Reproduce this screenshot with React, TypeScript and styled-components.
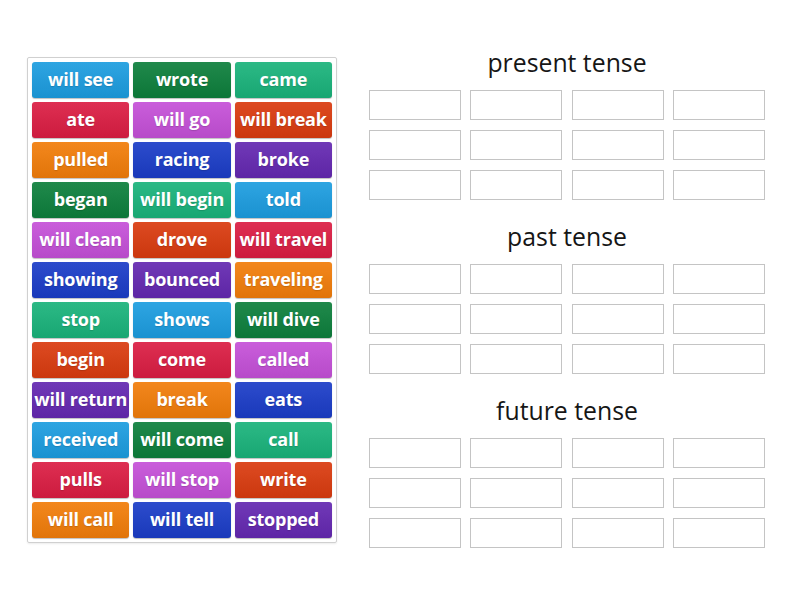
import React from "react";
import styled, { createGlobalStyle } from "styled-components";

const Global = createGlobalStyle`
  html, body { margin: 0; padding: 0; background: #ffffff; }
  body { font-family: "Open Sans", "Noto Sans", sans-serif; }
`;

const COLORS: Record<string, string> = {
  sky: "#1c9de0",
  forest: "#0d7f3c",
  teal: "#1ab37b",
  red: "#db1d43",
  magenta: "#c550d8",
  rust: "#da3b0f",
  orange: "#f27d0a",
  royal: "#1b3dc8",
  purple: "#6428b1",
};

type Tile = { word: string; color: keyof typeof COLORS };

const rows: Tile[][] = [
  [{ word: "will see", color: "sky" }, { word: "wrote", color: "forest" }, { word: "came", color: "teal" }],
  [{ word: "ate", color: "red" }, { word: "will go", color: "magenta" }, { word: "will break", color: "rust" }],
  [{ word: "pulled", color: "orange" }, { word: "racing", color: "royal" }, { word: "broke", color: "purple" }],
  [{ word: "began", color: "forest" }, { word: "will begin", color: "teal" }, { word: "told", color: "sky" }],
  [{ word: "will clean", color: "magenta" }, { word: "drove", color: "rust" }, { word: "will travel", color: "red" }],
  [{ word: "showing", color: "royal" }, { word: "bounced", color: "purple" }, { word: "traveling", color: "orange" }],
  [{ word: "stop", color: "teal" }, { word: "shows", color: "sky" }, { word: "will dive", color: "forest" }],
  [{ word: "begin", color: "rust" }, { word: "come", color: "red" }, { word: "called", color: "magenta" }],
  [{ word: "will return", color: "purple" }, { word: "break", color: "orange" }, { word: "eats", color: "royal" }],
  [{ word: "received", color: "sky" }, { word: "will come", color: "forest" }, { word: "call", color: "teal" }],
  [{ word: "pulls", color: "red" }, { word: "will stop", color: "magenta" }, { word: "write", color: "rust" }],
  [{ word: "will call", color: "orange" }, { word: "will tell", color: "royal" }, { word: "stopped", color: "purple" }],
];

const groups = ["present tense", "past tense", "future tense"];

const Page = styled.div`
  display: flex;
  align-items: flex-start;
  gap: 32px;
  padding: 49px 0 0 27px;
  width: 800px;
  height: 600px;
  box-sizing: border-box;
`;

const Bank = styled.div`
  margin-top: 8px;
  width: 310px;
  box-sizing: border-box;
  border: 1px solid #d0d0d0;
  border-radius: 2px;
  padding: 4px 5px 4px 4px;
  display: grid;
  grid-template-columns: repeat(3, 97.33px);
  grid-auto-rows: 36px;
  column-gap: 4px;
  row-gap: 4px;
  box-shadow: 0 1px 2px rgba(0, 0, 0, 0.08);
`;

const Card = styled.div<{ $bg: string }>`
  display: flex;
  align-items: center;
  justify-content: center;
  border-radius: 3px;
  background: linear-gradient(to bottom, rgba(255,255,255,0.08), rgba(0,0,0,0.07)), ${(p) => p.$bg};
  box-shadow: 0 1px 1px rgba(0, 0, 0, 0.25);
  color: #ffffff;
  font-family: "Open Sans", sans-serif;
  font-weight: 700;
  font-size: 18px;
  letter-spacing: -0.2px;
  white-space: nowrap;
  overflow: hidden;
  padding-bottom: 3px;
  box-sizing: border-box;
  text-shadow: 0 1px 1px rgba(0, 0, 0, 0.15);
`;

const Groups = styled.div`
  width: 396px;
  display: flex;
  flex-direction: column;
`;

const Group = styled.section`
  display: flex;
  flex-direction: column;
  margin-bottom: 23px;
`;

const Title = styled.div`
  height: 30px;
  line-height: 30px;
  text-align: center;
  font-family: "Open Sans", sans-serif;
  font-size: 24.8px;
  color: #161616;
  margin-bottom: 11px;
  margin-top: -2px;
  padding-bottom: 2px;
`;

const Slots = styled.div`
  display: grid;
  grid-template-columns: repeat(4, 92px);
  grid-auto-rows: 30px;
  column-gap: 9.33px;
  row-gap: 10px;
`;

const Slot = styled.div`
  box-sizing: border-box;
  border: 1px solid #c4c4c4;
  background: #ffffff;
`;

export default function App() {
  return (
    <>
      <Global />
      <Page>
        <Bank>
          {rows.flat().map((t, i) => (
            <Card key={i} $bg={COLORS[t.color]}>
              {t.word}
            </Card>
          ))}
        </Bank>
        <Groups>
          {groups.map((g) => (
            <Group key={g}>
              <Title>{g}</Title>
              <Slots>
                {Array.from({ length: 12 }).map((_, i) => (
                  <Slot key={i} />
                ))}
              </Slots>
            </Group>
          ))}
        </Groups>
      </Page>
    </>
  );
}
